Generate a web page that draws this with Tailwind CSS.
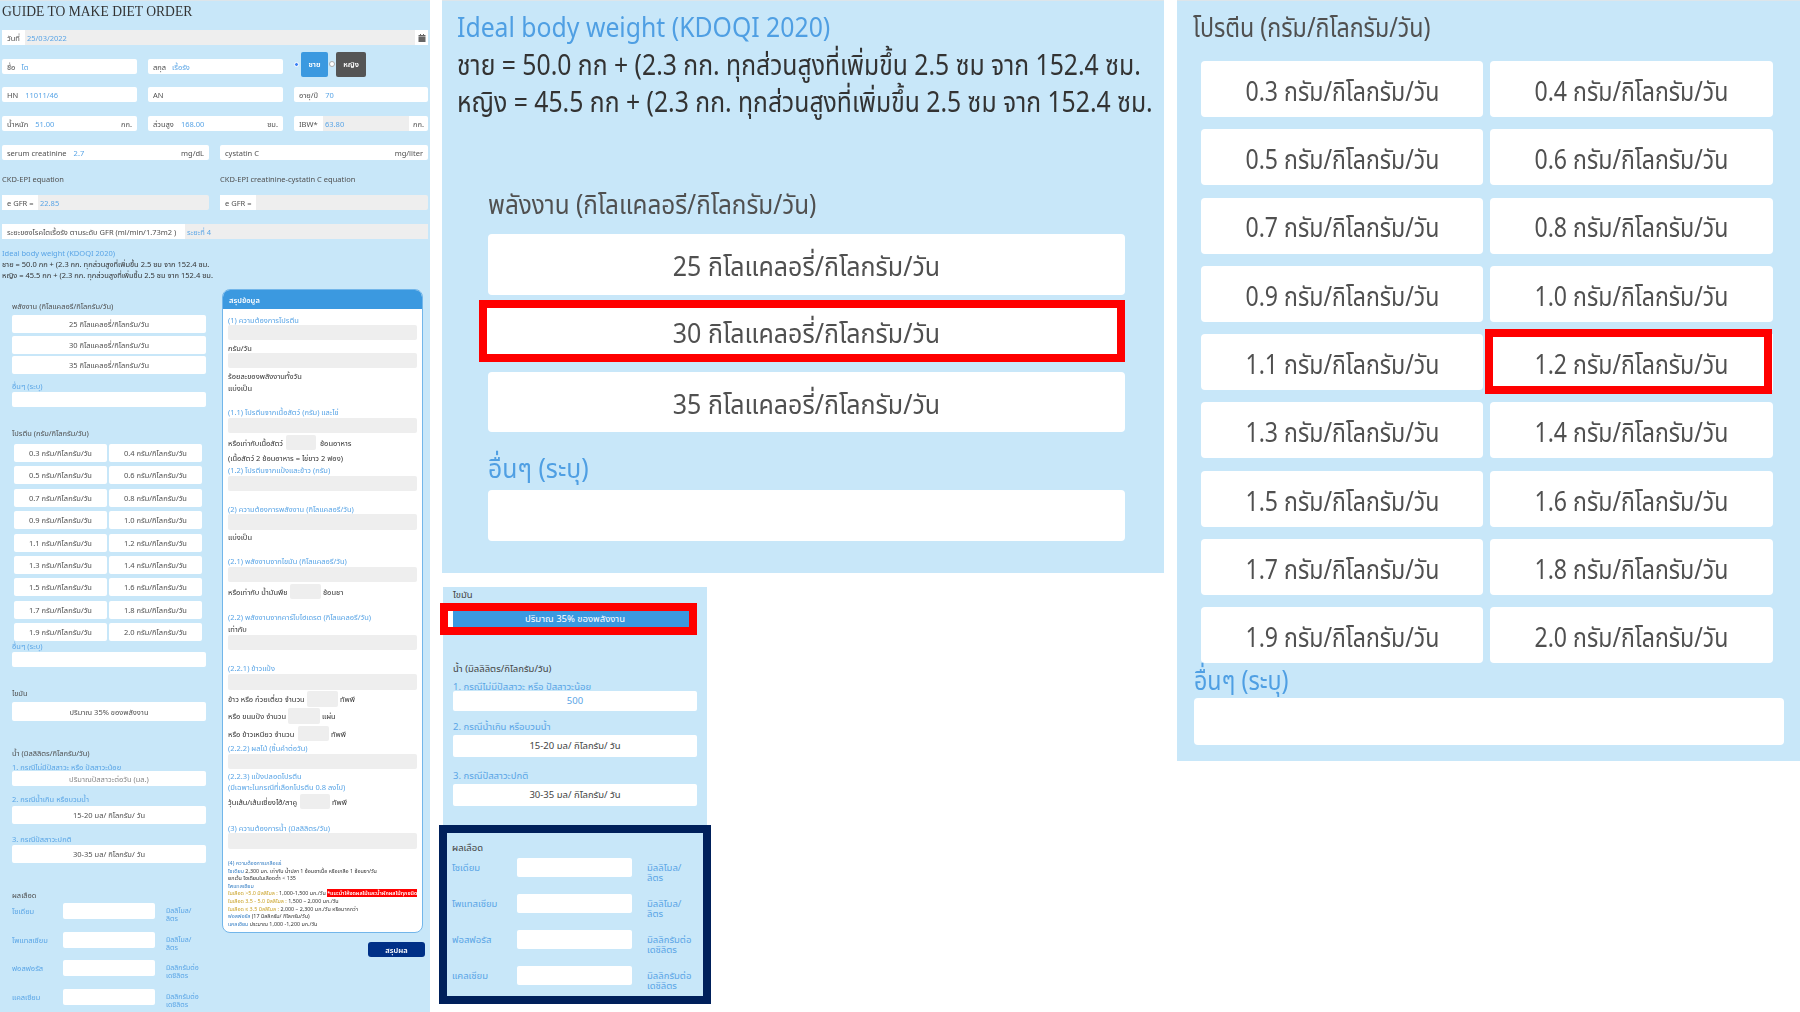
<!DOCTYPE html>
<html lang="th">
<head>
<meta charset="utf-8">
<title>Guide to make diet order</title>
<script src="https://cdn.jsdelivr.net/npm/@tailwindcss/browser@4"></script>
</head>
<body class="bg-white font-['Noto_Sans','Noto_Sans_Thai',sans-serif] text-[#505050] overflow-hidden">
<div class="relative w-[1800px] h-[1012px] overflow-hidden">

<!-- PANEL 1 -->
<section class="absolute left-0 top-0 w-[430px] h-[1012px] bg-[#c8e7f9] border-t border-[#dde5ea] text-[7.5px] leading-[10px] blur-[0.25px]">
  <h1 class="h-[23px] pl-[2px] pt-[2px] font-['Liberation_Serif',serif] text-[13.6px] leading-[18px] text-[#333] whitespace-nowrap">GUIDE TO MAKE DIET ORDER</h1>
  <div class="mx-[2px] mt-[6px] h-[15px] flex items-stretch bg-[#eeeeee] w-[426px]">
    <div class="bg-white w-[23px] flex items-center justify-center">วันที่</div>
    <div class="flex-1 flex items-center pl-[2px] text-[#5aa5e6]">25/03/2022</div>
    <div class="bg-white w-[13px] flex items-center justify-center"><svg width="8" height="8" viewBox="0 0 8 8" fill="#666"><rect x="0.5" y="1" width="7" height="1.6"/><rect x="0.5" y="3" width="7" height="5"/><rect x="2" y="0" width="1" height="1.5"/><rect x="5" y="0" width="1" height="1.5"/></svg></div>
  </div>
  <div class="mx-[2px] mt-[14px] h-[15px] flex items-center gap-[11px] w-[426px]">
    <div class="w-[135px] h-[15px] bg-white rounded-[2px] flex items-center px-[5px] gap-[6px]">ชื่อ <span class="text-[#5aa5e6]">โต</span></div>
    <div class="w-[135px] h-[15px] bg-white rounded-[2px] flex items-center px-[5px] gap-[6px]">สกุล <span class="text-[#5aa5e6]">เรื้อรัง</span></div>
    <div class="flex items-center -mt-[5px]">
      <span class="w-[5px] h-[5px] rounded-full bg-[#3b82f6] border border-white"></span>
      <span class="ml-[2px] w-[27px] h-[25px] bg-[#3b99e0] rounded-[2px] text-white flex items-center justify-center font-semibold">ชาย</span>
      <span class="ml-[1px] w-[6px] h-[6px] rounded-full bg-white border border-[#aaa]"></span>
      <span class="ml-[1px] w-[30px] h-[25px] bg-[#555] rounded-[2px] text-white flex items-center justify-center font-semibold">หญิง</span>
    </div>
  </div>
  <div class="mx-[2px] mt-[13px] h-[15px] flex gap-[11px] w-[426px]">
    <div class="w-[135px] bg-white rounded-[2px] flex items-center px-[5px] gap-[7px]">HN <span class="text-[#5aa5e6]">11011/46</span></div>
    <div class="w-[135px] bg-white rounded-[2px] flex items-center px-[5px]">AN</div>
    <div class="flex-1 bg-white rounded-[2px] flex items-center px-[5px] gap-[7px]">อายุ/ปี <span class="text-[#5aa5e6]">70</span></div>
  </div>
  <div class="mx-[2px] mt-[14px] h-[15px] flex gap-[11px] w-[426px]">
    <div class="w-[135px] bg-white rounded-[2px] flex items-center px-[5px] gap-[7px]">น้ำหนัก <span class="text-[#5aa5e6]">51.00</span><span class="ml-auto">กก.</span></div>
    <div class="w-[135px] bg-white rounded-[2px] flex items-center px-[5px] gap-[7px]">ส่วนสูง <span class="text-[#5aa5e6]">168.00</span><span class="ml-auto">ซม.</span></div>
    <div class="flex-1 bg-white rounded-[2px] flex items-stretch">
      <span class="w-[29px] pl-[5px] flex items-center">IBW*</span>
      <span class="flex-1 bg-[#eeeeee] flex items-center pl-[2px] text-[#5aa5e6]">63.80</span>
      <span class="w-[19px] flex items-center justify-center">กก.</span>
    </div>
  </div>
  <div class="mx-[2px] mt-[14px] h-[15px] flex gap-[11px] w-[426px]">
    <div class="w-[207px] bg-white rounded-[2px] flex items-center px-[5px] gap-[7px]">serum creatinine <span class="text-[#5aa5e6]">2.7</span><span class="ml-auto">mg/dL</span></div>
    <div class="flex-1 bg-white rounded-[2px] flex items-center px-[5px]">cystatin C<span class="ml-auto">mg/liter</span></div>
  </div>
  <div class="mx-[2px] mt-[14px] h-[10px] flex gap-[11px] w-[426px]">
    <div class="w-[207px]">CKD-EPI equation</div>
    <div class="flex-1">CKD-EPI creatinine-cystatin C equation</div>
  </div>
  <div class="mx-[2px] mt-[11px] h-[15px] flex gap-[11px] w-[426px]">
    <div class="w-[207px] bg-[#eeeeee] rounded-[2px] flex items-stretch"><span class="w-[36px] bg-white pl-[5px] flex items-center">e GFR =</span><span class="pl-[2px] flex items-center text-[#5aa5e6]">22.85</span></div>
    <div class="flex-1 bg-[#eeeeee] rounded-[2px] flex items-stretch"><span class="w-[36px] bg-white pl-[5px] flex items-center">e GFR =</span></div>
  </div>
  <div class="mx-[2px] mt-[14px] h-[15px] w-[426px] bg-[#eeeeee] flex items-stretch">
    <span class="w-[183px] bg-white pl-[5px] flex items-center whitespace-nowrap">ระยะของโรคไตเรื้อรัง ตามระดับ GFR (ml/min/1.73m2 )</span>
    <span class="pl-[2px] flex items-center text-[#5aa5e6]">ระยะที่ 4</span>
  </div>
  <div class="mx-[2px] mt-[9px] leading-[11px]">
    <div class="text-[#5aa5e6]">Ideal body weight (KDOQI 2020)</div>
    <div class="text-[#333]">ชาย = 50.0 กก + (2.3 กก. ทุกส่วนสูงที่เพิ่มขึ้น 2.5 ซม จาก 152.4 ซม.</div>
    <div class="text-[#333]">หญิง = 45.5 กก + (2.3 กก. ทุกส่วนสูงที่เพิ่มขึ้น 2.5 ซม จาก 152.4 ซม.</div>
  </div>

  <div class="mt-[8px] flex">
    <!-- left column -->
    <div class="w-[222px] pl-[12px] pr-[16px] shrink-0 text-center">
      <div class="mt-[12px] h-[10px] text-left">พลังงาน (กิโลแคลอรี/กิโลกรัม/วัน)</div>
      <div class="mt-[4px] h-[18px] bg-white rounded-[2px] flex items-center justify-center">25 กิโลแคลอรี่/กิโลกรัม/วัน</div>
      <div class="mt-[3px] h-[18px] bg-white rounded-[2px] flex items-center justify-center">30 กิโลแคลอรี่/กิโลกรัม/วัน</div>
      <div class="mt-[2px] h-[18px] bg-white rounded-[2px] flex items-center justify-center">35 กิโลแคลอรี่/กิโลกรัม/วัน</div>
      <div class="mt-[7px] h-[10px] text-left text-[#5aa5e6]">อื่นๆ (ระบุ)</div>
      <div class="mt-[1px] h-[15px] bg-white rounded-[2px]"></div>
      <div class="mt-[21px] h-[10px] text-left">โปรตีน (กรัม/กิโลกรัม/วัน)</div>
      <div class="mt-[6px] ml-[2px] mr-[4px] grid grid-cols-2 gap-x-[2px] gap-y-[4.4px] auto-rows-[18px]">
        <div class="bg-white rounded-[2px] flex items-center justify-center">0.3 กรัม/กิโลกรัม/วัน</div>
        <div class="bg-white rounded-[2px] flex items-center justify-center">0.4 กรัม/กิโลกรัม/วัน</div>
        <div class="bg-white rounded-[2px] flex items-center justify-center">0.5 กรัม/กิโลกรัม/วัน</div>
        <div class="bg-white rounded-[2px] flex items-center justify-center">0.6 กรัม/กิโลกรัม/วัน</div>
        <div class="bg-white rounded-[2px] flex items-center justify-center">0.7 กรัม/กิโลกรัม/วัน</div>
        <div class="bg-white rounded-[2px] flex items-center justify-center">0.8 กรัม/กิโลกรัม/วัน</div>
        <div class="bg-white rounded-[2px] flex items-center justify-center">0.9 กรัม/กิโลกรัม/วัน</div>
        <div class="bg-white rounded-[2px] flex items-center justify-center">1.0 กรัม/กิโลกรัม/วัน</div>
        <div class="bg-white rounded-[2px] flex items-center justify-center">1.1 กรัม/กิโลกรัม/วัน</div>
        <div class="bg-white rounded-[2px] flex items-center justify-center">1.2 กรัม/กิโลกรัม/วัน</div>
        <div class="bg-white rounded-[2px] flex items-center justify-center">1.3 กรัม/กิโลกรัม/วัน</div>
        <div class="bg-white rounded-[2px] flex items-center justify-center">1.4 กรัม/กิโลกรัม/วัน</div>
        <div class="bg-white rounded-[2px] flex items-center justify-center">1.5 กรัม/กิโลกรัม/วัน</div>
        <div class="bg-white rounded-[2px] flex items-center justify-center">1.6 กรัม/กิโลกรัม/วัน</div>
        <div class="bg-white rounded-[2px] flex items-center justify-center">1.7 กรัม/กิโลกรัม/วัน</div>
        <div class="bg-white rounded-[2px] flex items-center justify-center">1.8 กรัม/กิโลกรัม/วัน</div>
        <div class="bg-white rounded-[2px] flex items-center justify-center">1.9 กรัม/กิโลกรัม/วัน</div>
        <div class="bg-white rounded-[2px] flex items-center justify-center">2.0 กรัม/กิโลกรัม/วัน</div>
      </div>
      <div class="h-[10px] text-left text-[#5aa5e6]">อื่นๆ (ระบุ)</div>
      <div class="mt-[1px] h-[15px] bg-white rounded-[2px]"></div>
      <div class="mt-[21px] h-[10px] text-left">ไขมัน</div>
      <div class="mt-[4px] h-[19px] bg-white rounded-[2px] flex items-center justify-center">ปริมาณ 35% ของพลังงาน</div>
      <div class="mt-[27px] h-[10px] text-left">น้ำ (มิลลิลิตร/กิโลกรัม/วัน)</div>
      <div class="mt-[4px] h-[10px] text-left text-[#5aa5e6]">1. กรณีไม่มีปัสสาวะ หรือ ปัสสาวะน้อย</div>
      <div class="relative -mt-[1px] h-[15px] bg-white rounded-[2px] flex items-center justify-center text-[#888]">ปริมาณปัสสาวะต่อวัน (มล.)</div>
      <div class="mt-[8px] h-[10px] text-left text-[#5aa5e6]">2. กรณีน้ำเกิน หรือบวมน้ำ</div>
      <div class="mt-[2px] h-[18px] bg-white rounded-[2px] flex items-center justify-center">15-20 มล/ กิโลกรัม/ วัน</div>
      <div class="mt-[10px] h-[10px] text-left text-[#5aa5e6]">3. กรณีปัสสาวะปกติ</div>
      <div class="mt-[1px] h-[18px] bg-white rounded-[2px] flex items-center justify-center">30-35 มล/ กิโลกรัม/ วัน</div>
      <div class="mt-[27px] h-[10px] text-left">ผลเลือด</div>
      <div class="mt-[3px] h-[16px] flex items-center text-left text-[#5aa5e6]"><span class="w-[51px] shrink-0">โซเดียม</span><span class="w-[92px] h-[16px] bg-white rounded-[2px] shrink-0"></span><span class="ml-[11px] mt-[8px] leading-[8px] text-[7px]">มิลลิโมล/<br>ลิตร</span></div>
      <div class="mt-[12.7px] h-[16px] flex items-center text-left text-[#5aa5e6]"><span class="w-[51px] shrink-0">โพแทสเซียม</span><span class="w-[92px] h-[16px] bg-white rounded-[2px] shrink-0"></span><span class="ml-[11px] mt-[8px] leading-[8px] text-[7px]">มิลลิโมล/<br>ลิตร</span></div>
      <div class="mt-[12.4px] h-[16px] flex items-center text-left text-[#5aa5e6]"><span class="w-[51px] shrink-0">ฟอสฟอรัส</span><span class="w-[92px] h-[16px] bg-white rounded-[2px] shrink-0"></span><span class="ml-[11px] mt-[8px] leading-[8px] text-[7px]">มิลลิกรัมต่อ<br>เดซิลิตร</span></div>
      <div class="mt-[12.4px] h-[16px] flex items-center text-left text-[#5aa5e6]"><span class="w-[51px] shrink-0">แคลเซียม</span><span class="w-[92px] h-[16px] bg-white rounded-[2px] shrink-0"></span><span class="ml-[11px] mt-[8px] leading-[8px] text-[7px]">มิลลิกรัมต่อ<br>เดซิลิตร</span></div>
    </div>

    <!-- right column: summary card -->
    <div class="w-[201px] shrink-0 flex flex-col items-end">
      <div class="w-[201px] h-[644px] bg-white rounded-[8px] border border-[#72b6ea] overflow-hidden">
        <div class="h-[19px] bg-[#3b99e0] text-white font-semibold flex items-center pl-[6px]">สรุปข้อมูล</div>
        <div class="px-[5px] text-[#333] [&>p]:h-[10px] [&>p]:whitespace-nowrap">
          <p class="mt-[6px] text-[#5aa5e6]">(1) ความต้องการโปรตีน</p>
          <div class="h-[15px] bg-[#eeeeee] rounded-[2px]"></div>
          <p class="mt-[3px]">กรัม/วัน</p>
          <div class="h-[15px] bg-[#eeeeee] rounded-[2px]"></div>
          <p class="mt-[3px]">ร้อยละของพลังงานทั้งวัน</p>
          <p class="mt-[2px]">แบ่งเป็น</p>
          <p class="mt-[14px] text-[#5aa5e6]">(1.1) โปรตีนจากเนื้อสัตว์ (กรัม) และไข่</p>
          <div class="mt-[1px] h-[15px] bg-[#eeeeee] rounded-[2px]"></div>
          <div class="mt-[2px] h-[15px] flex items-center whitespace-nowrap"><span class="w-[58px] shrink-0">หรือเท่ากับเนื้อสัตว์</span><span class="w-[30px] h-[15px] bg-[#eeeeee] rounded-[2px] shrink-0"></span><span class="ml-[4px]">ช้อนอาหาร</span></div>
          <p class="mt-[3px]">(เนื้อสัตว์ 2 ช้อนอาหาร = ไข่ขาว 2 ฟอง)</p>
          <p class="mt-[2px] text-[#5aa5e6]">(1.2) โปรตีนจากแป้งและข้าว (กรัม)</p>
          <div class="mt-[1px] h-[15px] bg-[#eeeeee] rounded-[2px]"></div>
          <p class="mt-[13px] text-[#5aa5e6]">(2) ความต้องการพลังงาน (กิโลแคลอรี/วัน)</p>
          <div class="h-[16px] bg-[#eeeeee] rounded-[2px]"></div>
          <p class="mt-[2px]">แบ่งเป็น</p>
          <p class="mt-[14px] text-[#5aa5e6]">(2.1) พลังงานจากไขมัน (กิโลแคลอรี/วัน)</p>
          <div class="mt-[1px] h-[15px] bg-[#eeeeee] rounded-[2px]"></div>
          <div class="mt-[2px] h-[15px] flex items-center whitespace-nowrap"><span class="w-[62px] shrink-0">หรือเท่ากับ น้ำมันพืช</span><span class="w-[31px] h-[15px] bg-[#eeeeee] rounded-[2px] shrink-0"></span><span class="ml-[2px]">ช้อนชา</span></div>
          <p class="mt-[13px] text-[#5aa5e6]">(2.2) พลังงานจากคาร์โบไฮเดรต (กิโลแคลอรี/วัน)</p>
          <p class="mt-[2px]">เท่ากับ</p>
          <div class="mt-[1px] h-[15px] bg-[#eeeeee] rounded-[2px]"></div>
          <p class="mt-[13px] text-[#5aa5e6]">(2.2.1) ข้าวแป้ง</p>
          <div class="mt-[1px] h-[16px] bg-[#eeeeee] rounded-[2px]"></div>
          <div class="mt-[1px] h-[16px] flex items-center whitespace-nowrap"><span class="w-[79px] shrink-0">ข้าว หรือ ก๋วยเตี๋ยว จำนวน</span><span class="w-[31px] h-[16px] bg-[#eeeeee] rounded-[2px] shrink-0"></span><span class="ml-[2px]">ทัพพี</span></div>
          <div class="mt-[1px] h-[16px] flex items-center whitespace-nowrap"><span class="w-[60px] shrink-0">หรือ ขนมปัง จำนวน</span><span class="w-[32px] h-[16px] bg-[#eeeeee] rounded-[2px] shrink-0"></span><span class="ml-[2px]">แผ่น</span></div>
          <div class="mt-[2px] h-[15px] flex items-center whitespace-nowrap"><span class="w-[70px] shrink-0">หรือ ข้าวเหนียว จำนวน</span><span class="w-[31px] h-[15px] bg-[#eeeeee] rounded-[2px] shrink-0"></span><span class="ml-[2px]">ทัพพี</span></div>
          <p class="mt-[2px] text-[#5aa5e6]">(2.2.2) ผลไม้ (ชิ้นคำต่อวัน)</p>
          <div class="mt-[1px] h-[15px] bg-[#eeeeee] rounded-[2px]"></div>
          <p class="mt-[2px] text-[#5aa5e6]">(2.2.3) แป้งปลอดโปรตีน</p>
          <p class="mt-[1px] text-[#5aa5e6]">(มีเฉพาะในกรณีที่เลือกโปรตีน 0.8 ลงไป)</p>
          <div class="mt-[2px] h-[15px] flex items-center whitespace-nowrap"><span class="w-[72px] shrink-0">วุ้นเส้น/เส้นเซี่ยงไฮ้/สาคู</span><span class="w-[30px] h-[15px] bg-[#eeeeee] rounded-[2px] shrink-0"></span><span class="ml-[2px]">ทัพพี</span></div>
          <p class="mt-[14px] text-[#5aa5e6]">(3) ความต้องการน้ำ (มิลลิลิตร/วัน)</p>
          <div class="h-[16px] bg-[#eeeeee] rounded-[2px]"></div>
          <div class="mt-[11px] text-[5.4px] leading-[7.6px] whitespace-nowrap">
            <div class="text-[#3b82c6]">(4) ความต้องการเกลือแร่</div>
            <div><span class="text-[#3b82c6]">โซเดียม</span> 2,300 มก. เท่ากับ น้ำปลา 1 ช้อนชาเนื้อ หรือเกลือ 1 ช้อนชา/วัน</div>
            <div>ยกเว้น โซเดียมในเลือดต่ำ &lt; 135</div>
            <div class="text-[#3b82c6]">โพแทสเซียม</div>
            <div><span class="text-[#c9a227]">ในเลือด &gt;5.0 มิลลิโมล :</span> 1,000-1,500 มก./วัน <span class="bg-[#ff0000] text-white font-semibold">*แนะนำให้งดผลไม้และน้ำผักผลไม้ทุกชนิด</span></div>
            <div><span class="text-[#c9a227]">ในเลือด 3.5 - 5.0 มิลลิโมล :</span> 1,500 – 2,000 มก./วัน</div>
            <div><span class="text-[#c9a227]">ในเลือด ≤ 3.5 มิลลิโมล :</span> 2,000 – 2,300 มก./วัน หรือมากกว่า</div>
            <div><span class="text-[#3b82c6]">ฟอสฟอรัส</span> (17 มิลลิกรัม/ กิโลกรัม/วัน)</div>
            <div><span class="text-[#3b82c6]">แคลเซียม</span> ประมาณ 1,000 -1,200 มก./วัน</div>
          </div>
        </div>
      </div>
      <button class="mt-[9px] -mr-[2px] w-[57px] h-[15px] rounded-[3px] bg-[#003087] text-white font-semibold text-[7.5px]">สรุปผล</button>
    </div>
  </div>
</section>

<!-- PANEL 2 -->
<section class="absolute left-[442px] top-0 w-[722px] h-[573px] bg-[#c8e7f9] border-t border-[#dde5ea] text-[#505050]">
  <div class="pl-[15px] pt-[7px] h-[82px] text-[28px] leading-[36px] whitespace-nowrap">
    <span class="inline-block origin-left scale-x-[.885] text-[#4f9fe3]">Ideal body weight (KDOQI 2020)</span>
  </div>
  <div class="-mt-[38px] pl-[15px] text-[29px] leading-[37px] text-[#333] whitespace-nowrap">
    <div class="origin-left scale-x-[.853]">ชาย = 50.0 กก + (2.3 กก. ทุกส่วนสูงที่เพิ่มขึ้น 2.5 ซม จาก 152.4 ซม.</div>
    <div class="origin-left scale-x-[.853]">หญิง = 45.5 กก + (2.3 กก. ทุกส่วนสูงที่เพิ่มขึ้น 2.5 ซม จาก 152.4 ซม.</div>
  </div>
  <div class="ml-[46px] mr-[39px] text-[27px]">
    <div class="mt-[67px] h-[36px] leading-[36px] whitespace-nowrap"><span class="inline-block origin-left scale-x-[.9]">พลังงาน (กิโลแคลอรี/กิโลกรัม/วัน)</span></div>
    <div class="mt-[12px] h-[61px] pt-[4px] bg-white rounded-[4px] flex items-center justify-center"><span class="scale-x-[.925]">25 กิโลแคลอรี่/กิโลกรัม/วัน</span></div>
    <div class="mt-[5px] -ml-[9px] h-[62px] pt-[4px] pl-[9px] bg-white border-8 border-[#ff0000] flex items-center justify-center"><span class="scale-x-[.925]">30 กิโลแคลอรี่/กิโลกรัม/วัน</span></div>
    <div class="mt-[10px] h-[60px] pt-[4px] bg-white rounded-[4px] flex items-center justify-center"><span class="scale-x-[.925]">35 กิโลแคลอรี่/กิโลกรัม/วัน</span></div>
    <div class="mt-[18px] h-[36px] leading-[36px] text-[#4f9fe3]"><span class="inline-block origin-left scale-x-[.915]">อื่นๆ (ระบุ)</span></div>
    <div class="mt-[4px] h-[51px] bg-white rounded-[4px]"></div>
  </div>
</section>

<!-- PANEL 4 -->
<section class="absolute left-[443px] top-[587px] w-[264px] h-[238px] bg-[#c8e7f9] text-[9.5px] leading-[12px] text-[#444]">
  <div class="pl-[10px] pt-[2px] h-[16px]">ไขมัน</div>
  <div class="-ml-[3px] w-[257px] h-[32px] border-8 border-[#ff0000] bg-white flex">
    <div class="ml-[5px] flex-1 pl-[8px] bg-[#3b99e0] text-white flex items-center justify-center">ปริมาณ 35% ของพลังงาน</div>
  </div>
  <div class="pl-[10px] mt-[28px] h-[12px]">น้ำ (มิลลิลิตร/กิโลกรัม/วัน)</div>
  <div class="pl-[10px] mt-[6px] h-[12px] text-[#5aa5e6]">1. กรณีไม่มีปัสสาวะ หรือ ปัสสาวะน้อย</div>
  <div class="relative ml-[10px] w-[244px] -mt-[2px] h-[20px] bg-white rounded-[2px] flex items-center justify-center text-[#5aa5e6]">500</div>
  <div class="pl-[10px] mt-[10px] h-[12px] text-[#5aa5e6]">2. กรณีน้ำเกิน หรือบวมน้ำ</div>
  <div class="ml-[10px] w-[244px] mt-[2px] h-[22px] bg-white rounded-[2px] flex items-center justify-center">15-20 มล/ กิโลกรัม/ วัน</div>
  <div class="pl-[10px] mt-[13px] h-[12px] text-[#5aa5e6]">3. กรณีปัสสาวะปกติ</div>
  <div class="ml-[10px] w-[244px] mt-[2px] h-[22px] bg-white rounded-[2px] flex items-center justify-center">30-35 มล/ กิโลกรัม/ วัน</div>
</section>
<section class="absolute left-[439px] top-[825px] w-[272px] h-[179px] bg-[#c8e7f9] border-8 border-[#00205b] text-[9.5px] leading-[12px] text-[#444]">
  <div class="pl-[5px] mt-[9px] h-[12px]">ผลเลือด</div>
  <div class="mt-[4px] h-[19px] flex items-center text-[#5aa5e6]"><span class="pl-[5px] w-[70px] shrink-0">โซเดียม</span><span class="w-[115px] h-[19px] bg-white rounded-[2px] shrink-0"></span><span class="ml-[15px] mt-[11px] leading-[10px]">มิลลิโมล/<br>ลิตร</span></div>
  <div class="mt-[17px] h-[19px] flex items-center text-[#5aa5e6]"><span class="pl-[5px] w-[70px] shrink-0">โพแทสเซียม</span><span class="w-[115px] h-[19px] bg-white rounded-[2px] shrink-0"></span><span class="ml-[15px] mt-[11px] leading-[10px]">มิลลิโมล/<br>ลิตร</span></div>
  <div class="mt-[17px] h-[19px] flex items-center text-[#5aa5e6]"><span class="pl-[5px] w-[70px] shrink-0">ฟอสฟอรัส</span><span class="w-[115px] h-[19px] bg-white rounded-[2px] shrink-0"></span><span class="ml-[15px] mt-[11px] leading-[10px]">มิลลิกรัมต่อ<br>เดซิลิตร</span></div>
  <div class="mt-[17px] h-[19px] flex items-center text-[#5aa5e6]"><span class="pl-[5px] w-[70px] shrink-0">แคลเซียม</span><span class="w-[115px] h-[19px] bg-white rounded-[2px] shrink-0"></span><span class="ml-[15px] mt-[11px] leading-[10px]">มิลลิกรัมต่อ<br>เดซิลิตร</span></div>
</section>

<!-- PANEL 3 -->
<section class="absolute left-[1177px] top-0 w-[623px] h-[761px] bg-[#c8e7f9] border-t border-[#dde5ea] text-[#505050]">
  <div class="pl-[16px] pt-[8px] h-[60px] text-[27.5px] leading-[36px] whitespace-nowrap"><span class="inline-block origin-left scale-x-[.845]">โปรตีน (กรัม/กิโลกรัม/วัน)</span></div>
  <div class="ml-[24px] w-[572px] grid grid-cols-[282px_283px] gap-x-[7px] gap-y-[12.3px] auto-rows-[56px] text-[27.5px] [&>div]:pt-[3px] [&>div>span]:scale-x-[.84]">
    <div class="bg-white rounded-[4px] flex items-center justify-center"><span>0.3 กรัม/กิโลกรัม/วัน</span></div>
    <div class="bg-white rounded-[4px] flex items-center justify-center"><span>0.4 กรัม/กิโลกรัม/วัน</span></div>
    <div class="bg-white rounded-[4px] flex items-center justify-center"><span>0.5 กรัม/กิโลกรัม/วัน</span></div>
    <div class="bg-white rounded-[4px] flex items-center justify-center"><span>0.6 กรัม/กิโลกรัม/วัน</span></div>
    <div class="bg-white rounded-[4px] flex items-center justify-center"><span>0.7 กรัม/กิโลกรัม/วัน</span></div>
    <div class="bg-white rounded-[4px] flex items-center justify-center"><span>0.8 กรัม/กิโลกรัม/วัน</span></div>
    <div class="bg-white rounded-[4px] flex items-center justify-center"><span>0.9 กรัม/กิโลกรัม/วัน</span></div>
    <div class="bg-white rounded-[4px] flex items-center justify-center"><span>1.0 กรัม/กิโลกรัม/วัน</span></div>
    <div class="bg-white rounded-[4px] flex items-center justify-center"><span>1.1 กรัม/กิโลกรัม/วัน</span></div>
    <div class="relative bg-white flex items-center justify-center"><span>1.2 กรัม/กิโลกรัม/วัน</span><i class="absolute -left-[5px] -top-[5px] w-[287px] h-[65px] border-8 border-[#ff0000]"></i></div>
    <div class="bg-white rounded-[4px] flex items-center justify-center"><span>1.3 กรัม/กิโลกรัม/วัน</span></div>
    <div class="bg-white rounded-[4px] flex items-center justify-center"><span>1.4 กรัม/กิโลกรัม/วัน</span></div>
    <div class="bg-white rounded-[4px] flex items-center justify-center"><span>1.5 กรัม/กิโลกรัม/วัน</span></div>
    <div class="bg-white rounded-[4px] flex items-center justify-center"><span>1.6 กรัม/กิโลกรัม/วัน</span></div>
    <div class="bg-white rounded-[4px] flex items-center justify-center"><span>1.7 กรัม/กิโลกรัม/วัน</span></div>
    <div class="bg-white rounded-[4px] flex items-center justify-center"><span>1.8 กรัม/กิโลกรัม/วัน</span></div>
    <div class="bg-white rounded-[4px] flex items-center justify-center"><span>1.9 กรัม/กิโลกรัม/วัน</span></div>
    <div class="bg-white rounded-[4px] flex items-center justify-center"><span>2.0 กรัม/กิโลกรัม/วัน</span></div>
  </div>
  <div class="pl-[17px] -mt-[1px] h-[36px] text-[27px] leading-[36px] text-[#4f9fe3]"><span class="inline-block origin-left scale-x-[.86]">อื่นๆ (ระบุ)</span></div>
  <div class="ml-[17px] w-[590px] h-[47px] bg-white rounded-[4px]"></div>
</section>
</div>
</body>
</html>
